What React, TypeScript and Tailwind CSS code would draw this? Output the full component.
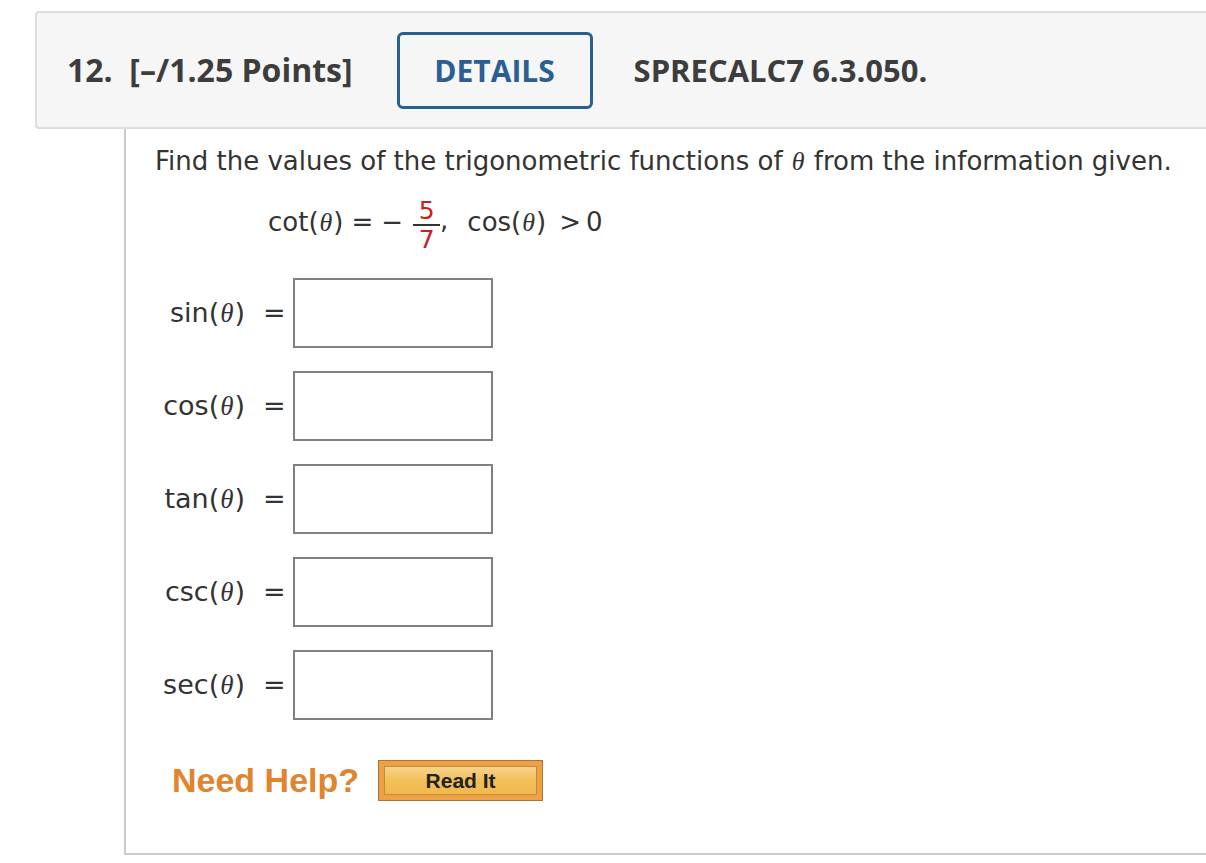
import React from "react";

const rows = ["sin", "cos", "tan", "csc", "sec"];

function Theta() {
  return (
    <span className="italic px-[1px]" style={{ fontFamily: '"Liberation Serif", "DejaVu Serif", serif' }}>
      θ
    </span>
  );
}

function Fn({ name }: { name: string }) {
  return (
    <span>
      {name}(<Theta />)
    </span>
  );
}

export default function App() {
  return (
    <div className="w-[1206px] h-[863px] overflow-hidden bg-white pt-[11px]">
      {/* question header */}
      <div className="ml-[35px] w-[1200px] h-[118px] rounded-l-[4px] border-2 border-[#dddddd] bg-[#f6f6f6] flex items-center pl-[30px] font-['Open_Sans',sans-serif] font-bold text-[#3d3d3d]">
        <span className="text-[32px]">12.&nbsp; [–/1.25 Points]</span>
        <button className="ml-[44px] w-[196px] h-[77px] rounded-[6px] border-[3px] border-[#2b5f93] text-[#2b5f93] text-[30px] font-bold">
          DETAILS
        </button>
        <span className="ml-[41px] text-[31px]">SPRECALC7 6.3.050.</span>
      </div>

      {/* question body */}
      <div className="ml-[124px] h-[726px] border-l-2 border-b-2 border-[#cccccc] pl-[29px] pt-[16px] font-['DejaVu_Sans',Verdana,sans-serif] text-[#333333]">
        <p className="text-[26px] leading-[32px] whitespace-nowrap">
          Find the values of the trigonometric functions of <Theta /> from the information given.
        </p>

        <div className="ml-[113px] mt-[14px] flex items-center text-[26px] h-[60px]">
          <Fn name="cot" />
          <span className="ml-[8px]">=</span>
          <span className="ml-[8px]">−</span>
          <span className="ml-[10px] mt-[6px] inline-flex flex-col items-center text-[#c8201e] text-[25px] leading-[27px]">
            <span>5</span>
            <span className="w-[27px] h-[2px] bg-[#333333]" />
            <span>7</span>
          </span>
          <span className="self-end mb-[12px]">,</span>
          <span className="ml-[19px]">
            <Fn name="cos" />
          </span>
          <span className="ml-[13px]">&gt;</span>
          <span className="ml-[5px]">0</span>
        </div>

        <div className="mt-[26px] flex flex-col gap-[23px]">
          {rows.map((r) => (
            <div key={r} className="flex items-center h-[70px] text-[27px]">
              <span className="w-[90px] text-right whitespace-nowrap">
                <Fn name={r} />
              </span>
              <span className="ml-[18px] w-[15px]">=</span>
              <div className="ml-[15px] w-[200px] h-[70px] border-2 border-[#808080] bg-white" />
            </div>
          ))}
        </div>

        <div className="mt-[35px] ml-[17px] flex items-center">
          <span className="font-['Liberation_Sans',Arial,sans-serif] font-bold text-[34px] text-[#e0852e]">
            Need Help?
          </span>
          <button className="ml-[19px] w-[165px] h-[41px] border border-[#a8763a] bg-[#eea044] p-[5px] flex">
            <span className="flex-1 flex items-center justify-center border border-[#c58a3c] bg-gradient-to-b from-[#f6d38a] via-[#f2bf58] to-[#f0b94f] font-['Liberation_Sans',Arial,sans-serif] font-bold text-[21px] text-[#222222]">
              Read It
            </span>
          </button>
        </div>
      </div>
    </div>
  );
}
